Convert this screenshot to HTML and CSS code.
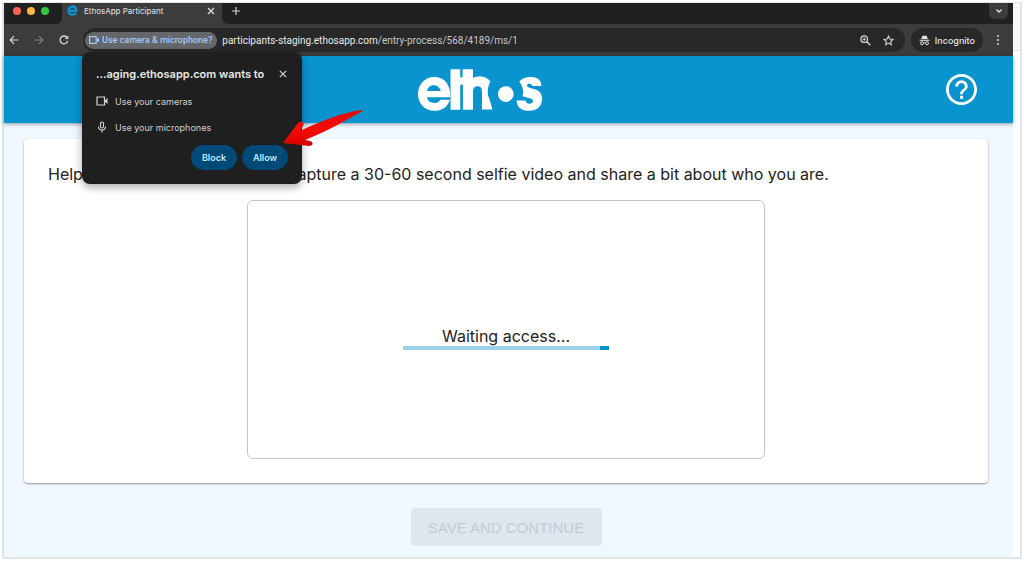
FILE: index.html
```html
<!DOCTYPE html>
<html lang="en">
<head>
<meta charset="utf-8">
<meta name="viewport" content="width=device-width, initial-scale=1">
<title>EthosApp Participant</title>
<link rel="stylesheet" href="styles.css">
</head>
<body>
<div class="frame">
  <div class="browser">
    <div class="tab-strip">
      <div class="lights"><span class="light red"></span><span class="light amber"></span><span class="light green"></span></div>
      <div class="tab">
        <svg class="favicon" viewBox="0 0 12 12" aria-hidden="true"><path d="M2 6.2H10.2C10.2 3.4 8.6 1.6 6 1.6S1.7 3.6 1.7 6.2 3.5 10.5 6.1 10.5C7.7 10.5 9 10 9.9 8.8" fill="none" stroke="#0b93d0" stroke-width="2.6"/></svg>
        <span class="tab-title">EthosApp Participant</span>
        <button class="plain tab-close" aria-label="Close tab"><svg width="8" height="8" viewBox="0 0 8 8"><path d="M1 1l6 6M7 1L1 7" stroke="#e3e3e3" stroke-width="1.2"/></svg></button>
      </div>
      <div class="strip-rest">
        <button class="plain new-tab" aria-label="New tab"><svg width="8" height="8" viewBox="0 0 8 8"><path d="M4 0v8M0 4h8" stroke="#d0d0d0" stroke-width="1.2"/></svg></button>
        <button class="plain tab-search" aria-label="Search tabs"><svg width="8" height="6" viewBox="0 0 8 6"><path d="M1.5 1.5L4 4l2.5-2.5" fill="none" stroke="#e3e3e3" stroke-width="1.3"/></svg></button>
      </div>
    </div>
    <div class="toolbar">
      <div class="nav">
        <button class="plain" aria-label="Back"><svg width="10" height="10" viewBox="0 0 10 10"><path d="M9.5 5H1.5M5 1.2L1.2 5 5 8.8" fill="none" stroke="#d6d6d6" stroke-width="1.2"/></svg></button>
        <button class="plain" aria-label="Forward"><svg width="10" height="10" viewBox="0 0 10 10"><path d="M.5 5h8M5 1.2L8.8 5 5 8.8" fill="none" stroke="#7f7f7f" stroke-width="1.2"/></svg></button>
        <button class="plain" aria-label="Reload"><svg width="10" height="10" viewBox="0 0 10 10"><path d="M8.7 6A3.9 3.9 0 1 1 8.2 2.7" fill="none" stroke="#d6d6d6" stroke-width="1.3"/><path d="M9.3.6v3.5H5.8z" fill="#d6d6d6"/></svg></button>
      </div>
      <div class="omnibox">
        <button class="chip"><svg width="10" height="8" viewBox="0 0 10 8"><path d="M.6.6h6.6v6.8H.6z" fill="none" stroke="#a8c7fa" stroke-width="1.2"/><path d="M7.5 3.5L10 1.5v5L7.5 4.5z" fill="#a8c7fa"/></svg>Use camera &amp; microphone?</button>
        <span class="url">participants-staging.ethosapp.com<span class="path">/entry-process/568/4189/ms/1</span></span>
        <button class="plain" aria-label="Zoom"><svg width="11" height="11" viewBox="0 0 11 11"><circle cx="4.2" cy="4.2" r="3.3" fill="none" stroke="#d6d6d6" stroke-width="1.2"/><path d="M6.6 6.6l3.7 3.7" stroke="#d6d6d6" stroke-width="1.4"/><path d="M2.5 4.2h3.4M4.2 2.5v3.4" stroke="#d6d6d6" stroke-width="1"/></svg></button>
        <button class="plain" aria-label="Bookmark"><svg width="11" height="11" viewBox="0 0 24 24"><path d="M12 2.5l2.9 6.4 7 .7-5.3 4.7 1.6 6.9L12 17.6l-6.2 3.6 1.6-6.9-5.3-4.7 7-.7z" fill="none" stroke="#d6d6d6" stroke-width="2.4"/></svg></button>
      </div>
      <button class="incognito"><svg width="11" height="11" viewBox="0 0 22 22"><path d="M6.5 1.5h9l2 6.5h-13z" fill="#e3e3e3"/><path d="M1 10.5h20" stroke="#e3e3e3" stroke-width="2.2"/><g fill="none" stroke="#e3e3e3" stroke-width="2"><circle cx="6" cy="16.5" r="3"/><circle cx="16" cy="16.5" r="3"/><path d="M9 16q2-1.5 4 0"/></g></svg>Incognito</button>
      <button class="plain more" aria-label="More"><svg width="4" height="12" viewBox="0 0 4 12" fill="#d6d6d6"><circle cx="2" cy="2" r="1"/><circle cx="2" cy="6" r="1"/><circle cx="2" cy="10" r="1"/></svg></button>
    </div>
    <header class="app-bar">
      <svg class="logo" viewBox="54 27 370 124" role="img" aria-label="ethos">
        <path fill="#fff" fill-rule="evenodd" d="M102 50C74 50 54 73 54 101s20 50 49 50c22 0 39-10 46-33h-28c-4 7-10 10-18 10-12 0-20-6-22-17h69C152 73 134 50 102 50zM81 92c2-10 9-17 20-17s18 7 21 17z"/>
        <path fill="#fff" d="M151 27h29v24h7V27h31v26c6-3 13-4 21-4 13 0 23 5 31 14-9 18-10 36-4 50 4 11 7 22 10 34h-31V96c0-12-4-18-13-18s-14 6-14 18v52h-30V73h-8v75h-29z"/>
        <circle cx="316" cy="101" r="23.5" fill="#fff"/>
        <path fill="#fff" d="M356 64c9-10 20-14 34-14 21 0 32 9 32 27h-27c-1-5-4-7-8-7-5 0-8 2-8 5 0 6 9 8 20 11 17 4 25 13 25 29 0 23-15 36-38 36-22 0-37-10-38-31h27c1 6 5 10 11 10 7 0 11-3 11-8 0-6-6-8-15-10l-16-4c4-16 0-31-10-44z"/>
      </svg>
      <button class="plain help" aria-label="Help"><svg width="31" height="31" viewBox="2 2 20 20" fill="#fff"><path d="M11 18h2v-2h-2v2zm1-16C6.48 2 2 6.48 2 12s4.48 10 10 10 10-4.48 10-10S17.52 2 12 2zm0 18.2c-4.52 0-8.2-3.68-8.2-8.2S7.48 3.8 12 3.8s8.2 3.68 8.2 8.2-3.68 8.2-8.2 8.2zM12 6c-2.21 0-4 1.79-4 4h1.8c0-1.21.99-2.2 2.2-2.2s2.2.99 2.2 2.2c0 2-3.1 1.75-3.1 5h1.8c0-2.25 3.1-2.5 3.1-5 0-2.21-1.79-4-4-4z"/></svg></button>
    </header>
    <main class="page">
      <section class="card">
        <p class="intro">Help us get to know you today. Capture a 30-60 second selfie video and share a bit about who you are.</p>
        <div class="preview">
          <div class="waiting"><span id="wait-label">Waiting access...</span><div class="bar" role="progressbar" aria-labelledby="wait-label"><div class="bar-fill"></div></div></div>
        </div>
      </section>
      <button class="save" disabled>SAVE AND CONTINUE</button>
    </main>
    <div class="prompt" role="dialog" aria-labelledby="prompt-title">
      <div class="prompt-head"><strong id="prompt-title">...aging.ethosapp.com wants to</strong><button class="plain" aria-label="Close"><svg width="8" height="8" viewBox="0 0 8 8"><path d="M.8.8l6.4 6.4M7.2.8L.8 7.2" stroke="#d6d6d6" stroke-width="1.2"/></svg></button></div>
      <div class="permission"><svg width="12" height="12" viewBox="0 0 12 12"><path d="M1 2h7.5v8H1z" fill="none" stroke="#d6d6d6" stroke-width="1.2"/><path d="M8.8 5.5L11.5 3v6L8.8 6.5z" fill="#d6d6d6"/></svg>Use your cameras</div>
      <div class="permission"><svg width="12" height="12" viewBox="0 0 12 12"><g fill="none" stroke="#d6d6d6" stroke-width="1.1"><rect x="4.5" y="1" width="3" height="6" rx="1.5"/><path d="M2.5 5.5a3.5 3.5 0 0 0 7 0M6 9v2.5"/></g></svg>Use your microphones</div>
      <div class="actions"><button>Block</button><button>Allow</button></div>
    </div>
    <svg class="arrow" viewBox="0 0 84 38" aria-hidden="true"><defs><linearGradient id="red" x1="0" y1="0" x2="0" y2="1"><stop offset="0" stop-color="#d90d0d"/><stop offset=".55" stop-color="#f80b05"/><stop offset="1" stop-color="#d40000"/></linearGradient></defs><path d="M2 34L17 14c3-3 7 0 5 3l-3 5C40 12 60 4 80 1c2 0 2 1 0 2C63 12 45 23 24 31l5 1c4 1 3 5-1 5z" fill="url(#red)"/></svg>
  </div>
</div>
</body>
</html>
```
FILE: styles.css
```css
* { box-sizing: border-box; }
body { margin: 0; min-height: 100vh; padding: 2px 2px 3px 2px; display: flex; background: #fff; font-family: Inter, "Liberation Sans", sans-serif; color: #222; }
button { font-family: inherit; border: 0; padding: 0; }
svg { display: block; flex: none; }
.plain { background: none; display: grid; place-items: center; }
.frame { flex: 1; display: flex; border: 1px solid #e0e4e6; border-width: 1px 2px 2px; padding-right: 7px; background: linear-gradient(#f8f8fa 47px, #e2e2e4 47px, #e2e2e4 48px, #fff 48px); }
.browser { flex: 1; position: relative; display: flex; flex-direction: column; background: #eff7ff; }

.tab-strip { height: 21px; display: flex; background: #3c3c3c; }
.lights { display: flex; gap: 6px; padding: 4px 6px 0 9px; width: 58px; border-bottom-right-radius: 6px; background: #1f2120; }
.light { width: 8px; height: 8px; border-radius: 50%; }
.red { background: #ff5f57; }
.amber { background: #ffb83e; }
.green { background: #33c748; }
.tab { width: 160px; display: flex; align-items: center; gap: 6px; padding: 0 7px 6px 5px; }
.favicon { width: 11px; height: 11px; }
.tab-title { flex: 1; font-size: 8px; color: #e3e3e3; }
.strip-rest { flex: 1; display: flex; border-bottom-left-radius: 6px; background: #1f2120; }
.new-tab { padding: 0 10px 6px; }
.tab-search { margin: 0 5px 5px auto; width: 19px; border-radius: 0 0 6px 6px; background: #3c3c3c; }

.toolbar { height: 32px; display: flex; align-items: center; gap: 6px; padding: 0 13px 0 5px; background: #3c3c3c; }
.nav { width: 68px; display: flex; gap: 15px; }
.omnibox { flex: 1; height: 24px; display: flex; align-items: center; gap: 12px; padding: 0 11px 0 2px; border-radius: 12px; background: #282828; }
.chip { display: flex; align-items: center; gap: 3px; height: 17px; padding: 0 5px 0 4px; margin-right: -7px; border-radius: 9px; background: #646669; color: #a8c7fa; font-family: Roboto, sans-serif; font-size: 9px; font-weight: 500; white-space: nowrap; }
.url { flex: 1; font-family: Roboto, sans-serif; font-size: 10px; color: #e8e8e8; white-space: nowrap; }
.path { color: #c7c7c7; }
.incognito { height: 24px; display: flex; align-items: center; gap: 5px; padding: 0 8px; border-radius: 12px; background: #282828; color: #e3e3e3; font-size: 9px; font-weight: 500; }
.more { margin-left: 7px; }

.app-bar { height: 67px; display: grid; grid-template-columns: 1fr auto 1fr; align-items: center; padding: 0 36px; background: #0993cf; box-shadow: 0 1px 4px rgba(0, 0, 0, .4); z-index: 1; }
.logo { grid-column: 2; width: 124px; height: 42px; margin-right: 58px; }
.help { justify-self: end; }

.page { flex: 1; display: flex; flex-direction: column; align-items: center; padding: 16px 25px 11px 20px; }
.card { width: 100%; flex: 1; display: flex; flex-direction: column; align-items: center; padding: 24px; border-radius: 4px; background: #fff; box-shadow: 0 1px 2px rgba(0, 0, 0, .4); }
.intro { align-self: stretch; margin: 0 0 14px; font-size: 16px; line-height: 23px; white-space: nowrap; }
.preview { flex: 1; width: 56.5%; display: grid; place-items: center; border: 1px solid #c4c4c4; border-radius: 6px; }
.waiting { width: 40%; padding-top: 16px; text-align: center; font-size: 16px; line-height: 20px; }
.bar { height: 4px; background: #9bd2eb; }
.bar-fill { width: 9px; height: 4px; margin-left: auto; background: #0993cf; }
.save { width: 191px; height: 38px; margin-top: 25px; border-radius: 4px; background: #dfe7ee; color: #c3ccd4; font-family: "Liberation Sans", sans-serif; font-size: 15px; }

.prompt { position: absolute; z-index: 2; left: 78px; top: 49px; width: 220px; padding: 14px; border-radius: 8px; background: #1f1f1f; color: #d0d0d0; box-shadow: 0 3px 8px rgba(0, 0, 0, .35); font-size: 9px; }
.prompt-head { display: flex; justify-content: space-between; align-items: center; height: 15px; margin-bottom: 7px; padding-right: 1px; font-size: 11px; color: #e8e8e8; }
.prompt-head strong { font-weight: 600; }
.permission { display: flex; align-items: center; gap: 7px; height: 26px; }
.actions { display: flex; justify-content: flex-end; gap: 5px; margin-top: 5px; }
.actions button { width: 46px; height: 25px; border-radius: 13px; background: #004a77; color: #c2e7ff; font-size: 9px; font-weight: 600; }
.arrow { position: absolute; z-index: 3; left: 277px; top: 106px; width: 84px; height: 38px; }
```
